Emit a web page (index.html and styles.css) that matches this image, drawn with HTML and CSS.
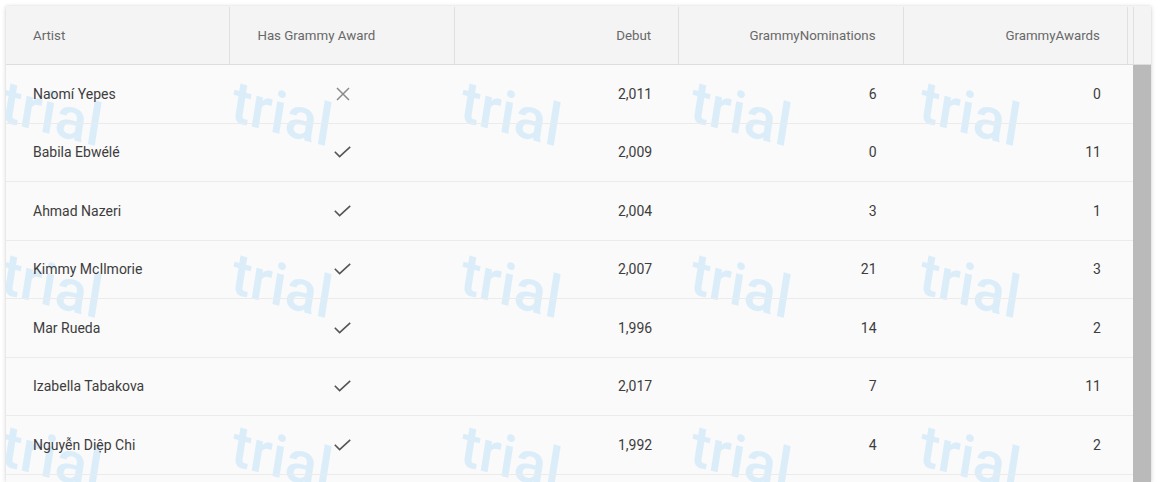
FILE: index.html
```html
<!DOCTYPE html>
<html>
<head>
<meta charset="utf-8">
<link rel="stylesheet" href="styles.css">
</head>
<body>
<div class="grid">
  <div class="head">
    <div class="hcell">Artist</div>
    <div class="hcell">Has Grammy Award</div>
    <div class="hcell num">Debut</div>
    <div class="hcell num">GrammyNominations</div>
    <div class="hcell num">GrammyAwards</div>
    <div class="hspacer"></div>
    <div class="hscroll"></div>
  </div>
  <div class="body">
    <div class="rows">
      <div class="marks">
        <span class="tile"><span class="wm">trial</span></span><span class="tile"><span class="wm">trial</span></span><span class="tile"><span class="wm">trial</span></span><span class="tile"><span class="wm">trial</span></span><span class="tile"><span class="wm">trial</span></span>
        <span class="tile"><span class="wm">trial</span></span><span class="tile"><span class="wm">trial</span></span><span class="tile"><span class="wm">trial</span></span><span class="tile"><span class="wm">trial</span></span><span class="tile"><span class="wm">trial</span></span>
        <span class="tile"><span class="wm">trial</span></span><span class="tile"><span class="wm">trial</span></span><span class="tile"><span class="wm">trial</span></span><span class="tile"><span class="wm">trial</span></span><span class="tile"><span class="wm">trial</span></span>
      </div>
      <div class="row">
        <div class="cell">Naomí Yepes</div>
        <div class="cell center"><svg class="ico-x" width="14" height="14" viewBox="0 0 14 14"><path d="M1 1L13 13M13 1L1 13" stroke="#8a8a8a" stroke-width="1.5" fill="none"/></svg></div>
        <div class="cell num">2,011</div>
        <div class="cell num">6</div>
        <div class="cell num">0</div>
      </div>
      <div class="row">
        <div class="cell">Babila Ebwélé</div>
        <div class="cell center"><svg class="ico-check" width="17" height="12" viewBox="0 0 17 12"><path d="M0.8 5.8L5.6 10.6L16.2 0.8" stroke="#555" stroke-width="1.6" fill="none"/></svg></div>
        <div class="cell num">2,009</div>
        <div class="cell num">0</div>
        <div class="cell num">11</div>
      </div>
      <div class="row">
        <div class="cell">Ahmad Nazeri</div>
        <div class="cell center"><svg class="ico-check" width="17" height="12" viewBox="0 0 17 12"><path d="M0.8 5.8L5.6 10.6L16.2 0.8" stroke="#555" stroke-width="1.6" fill="none"/></svg></div>
        <div class="cell num">2,004</div>
        <div class="cell num">3</div>
        <div class="cell num">1</div>
      </div>
      <div class="row">
        <div class="cell">Kimmy McIlmorie</div>
        <div class="cell center"><svg class="ico-check" width="17" height="12" viewBox="0 0 17 12"><path d="M0.8 5.8L5.6 10.6L16.2 0.8" stroke="#555" stroke-width="1.6" fill="none"/></svg></div>
        <div class="cell num">2,007</div>
        <div class="cell num">21</div>
        <div class="cell num">3</div>
      </div>
      <div class="row">
        <div class="cell">Mar Rueda</div>
        <div class="cell center"><svg class="ico-check" width="17" height="12" viewBox="0 0 17 12"><path d="M0.8 5.8L5.6 10.6L16.2 0.8" stroke="#555" stroke-width="1.6" fill="none"/></svg></div>
        <div class="cell num">1,996</div>
        <div class="cell num">14</div>
        <div class="cell num">2</div>
      </div>
      <div class="row">
        <div class="cell">Izabella Tabakova</div>
        <div class="cell center"><svg class="ico-check" width="17" height="12" viewBox="0 0 17 12"><path d="M0.8 5.8L5.6 10.6L16.2 0.8" stroke="#555" stroke-width="1.6" fill="none"/></svg></div>
        <div class="cell num">2,017</div>
        <div class="cell num">7</div>
        <div class="cell num">11</div>
      </div>
      <div class="row">
        <div class="cell">Nguyễn Diệp Chi</div>
        <div class="cell center"><svg class="ico-check" width="17" height="12" viewBox="0 0 17 12"><path d="M0.8 5.8L5.6 10.6L16.2 0.8" stroke="#555" stroke-width="1.6" fill="none"/></svg></div>
        <div class="cell num">1,992</div>
        <div class="cell num">4</div>
        <div class="cell num">2</div>
      </div>
      <div class="row">
        <div class="cell"></div>
        <div class="cell center"></div>
        <div class="cell num"></div>
        <div class="cell num"></div>
        <div class="cell num"></div>
      </div>
    </div>
    <div class="vscroll"></div>
  </div>
</div>
</body>
</html>
```

FILE: styles.css
```css
html, body {
  margin: 0;
  padding: 0;
  height: 100%;
  overflow: hidden;
  background: #ffffff;
}
body {
  padding: 6px 0 0 6px;
  box-sizing: border-box;
  font-family: Roboto, "Liberation Sans", sans-serif;
  font-size: 14px;
}
.grid {
  width: 1145px;
  height: 100%;
  background: #fafafa;
  box-shadow: 0 1px 5px rgba(0, 0, 0, 0.16), 0 0 2px rgba(0, 0, 0, 0.08);
  display: flex;
  flex-direction: column;
}
.head {
  display: flex;
  height: 59px;
  padding-top: 1px;
  background: #f4f4f4;
  border-bottom: 1px solid #dddddd;
  box-sizing: border-box;
  flex: none;
}
.hcell {
  width: 224.4px;
  flex: none;
  box-sizing: border-box;
  border-right: 1px solid #e0e0e0;
  padding: 0 27px;
  display: flex;
  align-items: center;
  color: #686868;
  font-weight: 400;
  font-size: 13.3px;
}
.hcell.num { justify-content: flex-end; padding-right: 27px; }
.hspacer {
  width: 5px;
  flex: none;
  border-right: 1px solid #e0e0e0;
}
.hscroll {
  flex: 1;
}
.body {
  display: flex;
  flex: 1;
  min-height: 0;
}
.rows {
  flex: 1;
  position: relative;
  overflow: hidden;
}
.marks {
  position: absolute;
  left: 0;
  top: 0;
  width: 1160px;
  display: grid;
  grid-template-columns: repeat(5, 229.5px);
  grid-auto-rows: 172px;
  pointer-events: none;
  z-index: 0;
}
.tile {
  display: block;
  position: relative;
}
.wm {
  position: absolute;
  left: 1px;
  top: 6px;
  font-family: Roboto, sans-serif;
  font-weight: 500;
  font-size: 59px;
  line-height: 1;
  color: #dcedfa;
  transform-origin: 0 0;
  transform: rotate(9deg) skewY(6deg);
}
.row {
  display: flex;
  height: 58.5px;
  box-sizing: border-box;
  border-bottom: 1px solid #ebebeb;
  position: relative;
  z-index: 1;
  flex: none;
}
.cell {
  width: 224.4px;
  flex: none;
  box-sizing: border-box;
  padding: 0 27px;
  display: flex;
  align-items: center;
  color: #3d3d3d;
}
.cell.num { justify-content: flex-end; }
.cell.center { justify-content: center; padding: 0; }
.vscroll {
  width: 18px;
  flex: none;
  background: #bababa;
}
```
